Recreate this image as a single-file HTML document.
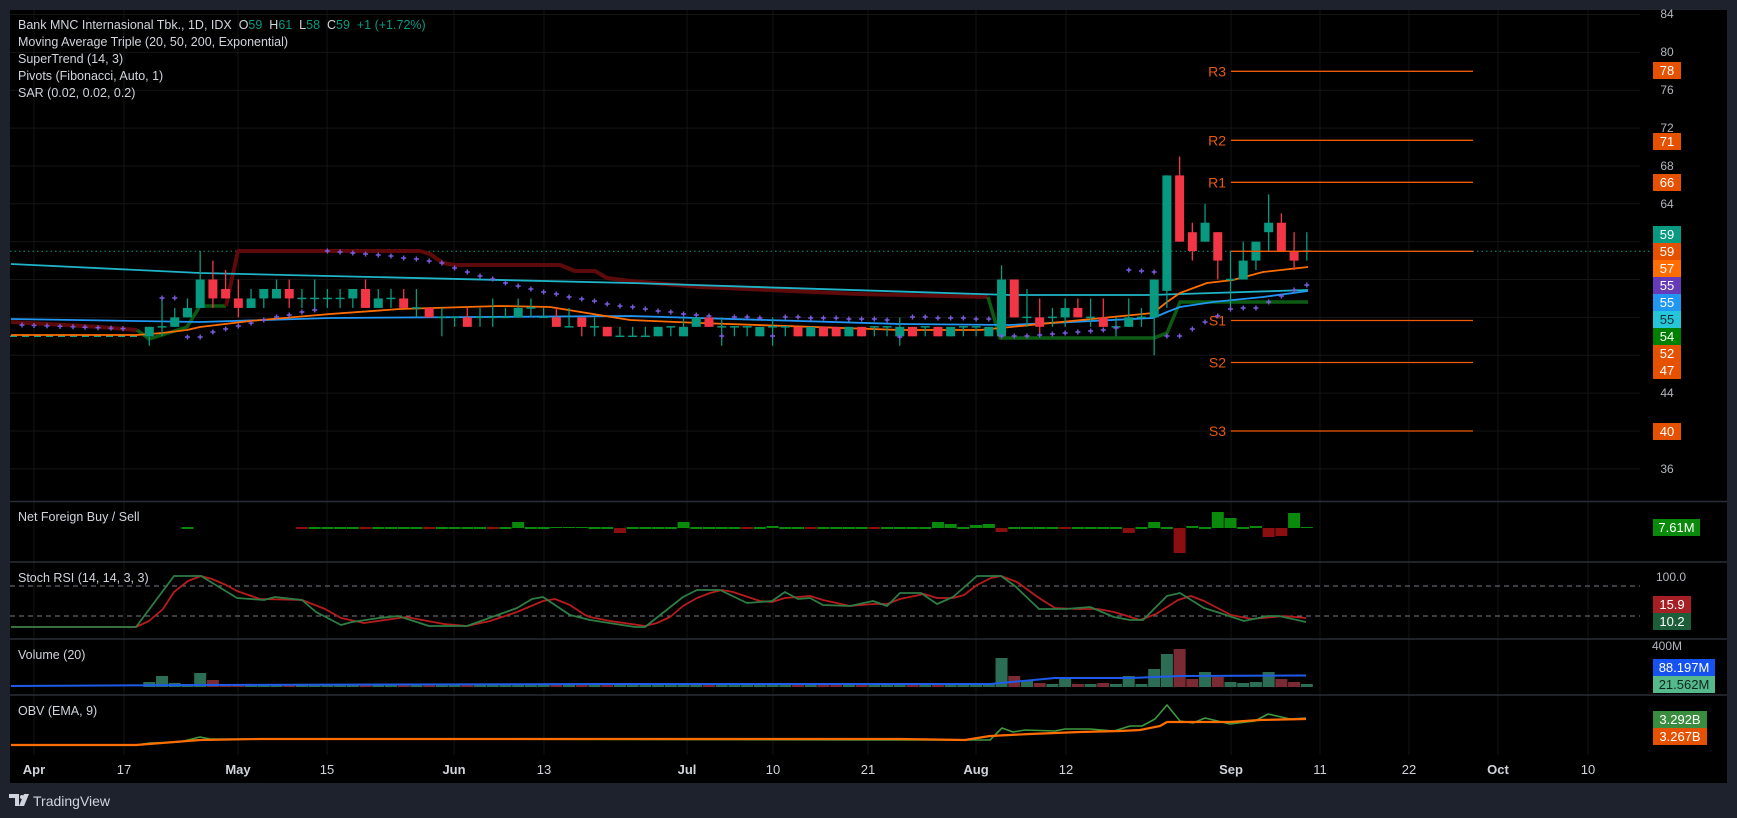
<!DOCTYPE html>
<html><head><meta charset="utf-8">
<style>
html,body{margin:0;padding:0;background:#1e222d;width:1737px;height:818px;overflow:hidden}
svg{display:block}
text{font-family:"Liberation Sans",sans-serif}
</style></head>
<body>
<svg id="s" width="1737" height="818" xmlns="http://www.w3.org/2000/svg">
<rect x="0" y="0" width="1737" height="818" fill="#1e222d"/>
<rect x="10" y="10" width="1717" height="773" fill="#000"/>
<g id="grid"></g>
<g id="content"></g>
<!-- legend -->
<g font-size="12.5" fill="#d1d4dc">
<text x="18" y="29">Bank MNC Internasional Tbk., 1D, IDX&#160;&#160;O<tspan fill="#089981">59</tspan>&#160;&#160;H<tspan fill="#089981">61</tspan>&#160;&#160;L<tspan fill="#089981">58</tspan>&#160;&#160;C<tspan fill="#089981">59</tspan>&#160;&#160;<tspan fill="#089981">+1 (+1.72%)</tspan></text>
<text x="18" y="46">Moving Average Triple (20, 50, 200, Exponential)</text>
<text x="18" y="63">SuperTrend (14, 3)</text>
<text x="18" y="80">Pivots (Fibonacci, Auto, 1)</text>
<text x="18" y="97">SAR (0.02, 0.02, 0.2)</text>
<text x="18" y="521">Net Foreign Buy / Sell</text>
<text x="18" y="582">Stoch RSI (14, 14, 3, 3)</text>
<text x="18" y="659">Volume (20)</text>
<text x="18" y="715">OBV (EMA, 9)</text>
</g>
<!-- price axis -->
<g font-size="12" fill="#b2b5be" text-anchor="middle">
<text x="1667" y="18">84</text><text x="1667" y="56">80</text><text x="1667" y="94">76</text>
<text x="1667" y="132">72</text><text x="1667" y="170">68</text><text x="1667" y="208">64</text>
<text x="1667" y="397">44</text><text x="1667" y="473">36</text>
<text x="1671" y="581">100.0</text><text x="1667" y="650">400M</text>
</g>
<!-- time axis -->
<g font-size="13" fill="#d1d4dc" text-anchor="middle">
<text x="34" y="774" font-weight="bold">Apr</text><text x="124" y="774">17</text>
<text x="238" y="774" font-weight="bold">May</text><text x="327" y="774">15</text>
<text x="454" y="774" font-weight="bold">Jun</text><text x="544" y="774">13</text>
<text x="687" y="774" font-weight="bold">Jul</text><text x="773" y="774">10</text>
<text x="868" y="774">21</text><text x="976" y="774" font-weight="bold">Aug</text>
<text x="1066" y="774">12</text><text x="1231" y="774" font-weight="bold">Sep</text>
<text x="1320" y="774">11</text><text x="1409" y="774">22</text>
<text x="1498" y="774" font-weight="bold">Oct</text><text x="1588" y="774">10</text>
</g>
<g id="boxes"></g>
<!-- TradingView logo -->
<g fill="#d1d4dc">
<path d="M9 794h10v12h-4v-8h-6z"/>
<circle cx="22" cy="797" r="2"/>
<path d="M24 794h5l-5 12h-5z"/>
<text x="33" y="806" font-size="14" fill="#d1d4dc">TradingView</text>
</g>
</svg>
<script>
const NS="http://www.w3.org/2000/svg";
const C=document.getElementById('content'),G=document.getElementById('grid'),B=document.getElementById('boxes');
let h='',g='',b='';
const Y=p=>14.5+(84-p)*9.465, X=i=>149.3+12.72*i;
// grid
[84,80,76,72,68,64,60,56,52,48,44,40,36].forEach(p=>{g+=`<line x1="10" x2="1640" y1="${Y(p)}" y2="${Y(p)}" stroke="#141414"/>`});
[34,124,238,327,454,544,687,773,868,976,1066,1231,1320,1409,1498,1588].forEach(x=>{g+=`<line x1="${x}" x2="${x}" y1="10" y2="755" stroke="#141414"/>`});
[501.5,562,639,695].forEach(y=>{g+=`<line x1="10" x2="1727" y1="${y}" y2="${y}" stroke="#2a2e39" stroke-width="1.5"/>`});
G.innerHTML=g;
const pl=(pts,col,w,extra='')=>`<polyline fill="none" stroke="${col}" stroke-width="${w}" stroke-linejoin="round" ${extra} points="${pts.map(p=>p.join(',')).join(' ')}"/>`;
// price dotted line
h+=`<line x1="10" x2="1653" y1="251.3" y2="251.3" stroke="#089981" stroke-dasharray="1.5 3"/>`;
// pre-candle dashed teal
h+=`<line x1="10" x2="140" y1="336.3" y2="336.3" stroke="#1f9e84" stroke-width="1.5" stroke-dasharray="7 5"/>`;
// supertrend
h+=pl([[11,322],[100,327],[137,330]],'#5e0a0a',4);
h+=pl([[137,330],[149,339],[162,335],[187,327],[200,306],[226,306]],'#0d5a12',3.5);
h+=pl([[226,306],[238,251],[420,251],[430,254],[443,263],[455,265],[560,265],[575,271],[595,271],[607,278],[630,281],[700,287],[860,294],[988,297]],'#5e0a0a',4);
h+=pl([[988,297],[1000,338],[1154,338],[1167,333],[1180,302],[1308,302]],'#0d5a12',3.5);
// MAs
h+=pl([[11,264],[200,273],[630,283],[1010,295],[1150,295],[1213,293],[1308,290]],'#1fb4c8',1.8);
h+=pl([[11,319],[200,322],[330,318],[630,316],[900,324],[1010,325],[1153,318],[1167,312],[1180,307],[1213,302],[1263,297],[1308,291]],'#2196f3',1.8);
h+=pl([[11,335],[137,335],[162,333],[187,330],[200,327],[250,321],[330,314],[400,309],[500,306],[550,307],[630,320],[700,323],[900,330],[980,330],[1153,313],[1167,302],[1180,293],[1207,283],[1233,280],[1263,272],[1308,267]],'#ff6d00',1.8);
// candles
const D=[[50,51,49,51],[51,54,50,51],[51,53,51,52],[52,54,52,53],[53,59,53,56],[56,58,53,54],[55,57,54,54],[54,56,52,53],[53,55,53,54],[54,55,53,55],
[54,56,54,55],[55,56,53,54],[54,55,53,54],[54,56,53,54],[54,55,53,54],[54,55,53,54],[54,55,53,55],[55,56,53,53],[53,55,53,54],[54,55,53,54],
[54,55,53,53],[53,55,52,53],[53,53,52,52],[52,53,50,52],[52,52,51,52],[52,53,51,51],[52,53,51,52],[52,54,51,52],[52,53,52,52],[52,54,52,53],
[53,54,52,53],[52,53,52,52],[52,53,51,51],[51,53,51,51],[52,52,50,51],[51,52,50,51],[51,51,50,50],[50,51,50,50],[50,51,50,50],[50,51,50,50],
[50,51,50,51],[51,51,50,51],[50,52,50,51],[51,52,51,52],[52,52,51,51],[51,52,49,51],[51,51,50,51],[51,51,50,51],[50,51,50,51],[51,52,49,51],
[51,51,50,51],[51,51,50,50],[50,51,50,51],[51,51,50,50],[51,51,50,50],[50,51,50,51],[51,51,50,50],[51,51,50,51],[51,51,50,51],[50,52,49,51],
[51,51,50,50],[51,51,50,51],[51,51,50,50],[50,51,50,51],[51,51,50,51],[51,51,50,51],[50,51,50,51],[50,57.5,50,56],[56,56,52,52],[52,55,51,52],
[52,54,50,51],[52,53,51,52],[52,54,51,53],[53,54,52,52],[52,54,51,52],[52,54,51,51],[51,52,50,51],[51,54,51,52],[52,53,51,52],[52,56,48,56],
[54.8,67,53,67],[67,69,60,60],[61,62,58,59],[60,64,60,62],[61,61,56,58],[56,59,53,56],[56,60,56,58],[58,60,57,60],[61,65,59,62],[62,63,59,59],
[59,61,57,58],[59,61,58,59]];
D.forEach((d,i)=>{const [o,hi,lo,c]=d,x=X(i);
 const col=c>=o?'#089981':'#f23645';
 h+=`<line x1="${x}" x2="${x}" y1="${Y(hi)}" y2="${Y(lo)}" stroke="${col}" stroke-width="1.3"/>`;
 if(o==c){h+=`<line x1="${x-4.5}" x2="${x+4.5}" y1="${Y(c)}" y2="${Y(c)}" stroke="${col}" stroke-width="1.5"/>`;}
 else h+=`<rect x="${x-4.5}" y="${Y(Math.max(o,c))}" width="9" height="${Math.abs(o-c)*9.465}" fill="${col}"/>`;
});
// SAR
const S=[null,298,298,337,337,332,329,326,323,320,317,315,312,310,251,252,253,254,255,256,258,259,261,263,268,272,276,279,283,286,289,292,294,297,299,301,304,306,307,309,311,312,314,315,316,336,317,317,318,336,317,317,318,318,318,319,319,319,320,337,317,317,318,318,318,319,319,336,336,336,335,334,333,332,331,330,328,270,271,272,336,336,329,322,316,309,308,308,302,296,290,285];
const cross=(x,y)=>`<path d="M${x-2.5} ${y}h5M${x} ${y-2.5}v5" stroke="#7b5ce0" stroke-width="1.4"/>`;
[22,34,47,60,73,85,98,111,123].forEach((x,k)=>{h+=cross(x,325+k*0.45)});
S.forEach((y,i)=>{if(y)h+=cross(X(i),y)});
// pivots
const piv=[['R3',71.3],['R2',140.3],['R1',182.3],['P',251.3],['S1',320.5],['S2',362.5],['S3',431]];
piv.forEach(([n,y])=>{h+=`<line x1="1231" x2="1473" y1="${y}" y2="${y}" stroke="#ef5a0a" stroke-width="1.3"/>`;
 if(n!='P')h+=`<text x="1226" y="${y+5}" font-size="14" fill="#e8590c" text-anchor="end">${n}</text>`;});
// foreign
const near=x=>Math.round((x-149.3)/12.72);
const F={};
[[517,522,1],[562,527,1],[575,527,1],[588,527,1],[620,533,0],[683,522,1],[773,526,1],[938,522,1],[950,524,1],[976,525,1],[989,524,1],[1001,532,0],[1129,533,0],[1154,522,1],[1180,553,0],[1193,526,1],[1218,512,1],[1231,518,1],[1257,526,1],[1269,537,0],[1282,536,0],[1294,513,1],[1307,527,1]].forEach(a=>F[near(a[0])]=a);
for(let i=1;i<92;i++){const x=X(i);let y1,y2,col;
 if(F[i]){const [_,y,gr]=F[i];col=gr?'#0a8a0a':'#8b0f0f';y1=gr?y:528;y2=gr?528:y;}
 else{col=(i%5==2)?'#8b0f0f':'#0a8a0a';y1=527;y2=529;if(i<12&&i!=3)continue;}
 h+=`<rect x="${x-6}" y="${y1}" width="12" height="${y2-y1}" fill="${col}"/>`;}
// stoch
h+=`<line x1="10" x2="1640" y1="586" y2="586" stroke="#787b86" stroke-dasharray="5 4"/><line x1="10" x2="1640" y1="616" y2="616" stroke="#787b86" stroke-dasharray="5 4"/>`;
h+=pl([[11,627],[136,627],[149,621],[163,609],[174,592],[188,581],[201,576],[212,579],[226,585],[237,591],[260,599],[302,600],[325,609],[341,618],[364,623],[406,617],[444,624],[467,626],[490,621],[517,612],[543,601],[555,599],[570,605],[585,615],[590,617],[610,621],[645,626],[657,623],[670,617],[683,606],[697,598],[710,593],[722,590],[733,592],[760,601],[772,602],[785,598],[810,596],[823,600],[850,606],[873,604],[887,604],[900,599],[924,594],[937,598],[953,598],[964,595],[977,585],[991,578],[1001,576],[1017,582],[1039,598],[1055,608],[1076,609],[1098,609],[1114,612],[1140,620],[1156,614],[1178,600],[1191,596],[1204,601],[1231,615],[1252,619],[1284,616],[1306,618]],'#b71c1c',1.8);
h+=pl([[11,627],[136,627],[174,576],[201,576],[237,598],[264,600],[275,597],[302,600],[316,612],[341,625],[352,622],[379,618],[398,616],[429,626],[467,626],[517,608],[532,599],[543,597],[570,615],[590,620],[635,627],[645,627],[683,597],[697,590],[720,590],[747,603],[772,601],[785,592],[798,599],[810,598],[823,605],[850,606],[873,601],[887,606],[900,593],[921,593],[937,604],[953,597],[977,576],[1001,576],[1015,586],[1039,609],[1066,609],[1090,607],[1114,617],[1130,620],[1143,620],[1167,596],[1180,593],[1204,608],[1220,613],[1244,621],[1268,616],[1279,616],[1306,622]],'#2e7d45',1.8);
// volume
const V={};
[[149,682,1],[162,676,1],[174,683,1],[200,673,1],[213,680,0],[1001,658,1],[1014,676,0],[1027,681,1],[1040,683,0],[1065,679,1],[1078,684,0],[1104,683,0],[1129,676,1],[1154,669,1],[1167,654,1],[1180,649,0],[1193,679,0],[1205,672,1],[1218,677,0],[1231,682,1],[1244,683,1],[1257,682,1],[1269,672,1],[1282,679,0],[1294,682,0],[1307,684,1]].forEach(a=>V[near(a[0])]=a);
D.forEach((d,i)=>{const x=X(i);let y=684,gr=d[3]>=d[0];if(V[i]){y=V[i][1];gr=V[i][2];}
 h+=`<rect x="${x-6}" y="${y}" width="12" height="${687-y}" fill="${gr?'#2b6e55':'#7a2a33'}"/>`;});
h+=pl([[11,686],[200,685],[600,684],[990,684],[1055,678],[1130,678],[1180,676],[1306,675.5]],'#1e5bea',2);
// OBV
h+=pl([[11,745],[136,745],[150,743],[180,742],[200,737],[210,739],[400,739],[900,740],[990,740],[1002,728],[1013,732],[1025,730],[1055,731],[1065,729],[1090,729],[1114,731],[1130,726],[1142,726],[1155,719],[1167,705],[1180,721],[1193,723],[1205,718],[1230,724],[1255,721],[1268,714],[1290,719],[1306,718]],'#3d9a3d',1.6);
h+=pl([[11,745],[136,745],[200,740],[260,739],[900,739],[965,740],[990,736],[1030,734],[1080,732],[1120,731],[1140,730],[1160,726],[1167,722],[1230,722],[1260,720],[1306,719]],'#ff6d00',2.2);
C.innerHTML=h;
// boxes
const box=(y,txt,bg,w,fg)=>{b+=`<rect x="1653" y="${y}" width="${w}" height="17" fill="${bg}"/><text x="${1653+w/2}" y="${y+13}" font-size="13" fill="${fg||'#fff'}" text-anchor="middle">${txt}</text>`};
box(62,'78','#e65100',28);box(133,'71','#e65100',28);box(174,'66','#e65100',28);
box(226,'59','#089981',28);box(243,'59','#e65100',28);box(260,'57','#ff6d00',28);
box(277,'55','#673ab7',28);box(294,'55','#2196f3',28);box(311,'55','#26c6da',28,'#0c2c33');
box(328,'54','#008000',28);box(345,'52','#e65100',28);box(362,'47','#e65100',28);box(423,'40','#e65100',28);
box(519,'7.61M','#0a8a0a',47);box(596,'15.9','#a51f24',38);box(613,'10.2','#1d5e3a',38);
box(659,'88.197M','#1652f0',62);box(676,'21.562M','#55b98b',62,'#10261b');
box(711,'3.292B','#3a8c3e',54);box(728,'3.267B','#e65100',54);
B.innerHTML=b;
</script>
</body></html>
